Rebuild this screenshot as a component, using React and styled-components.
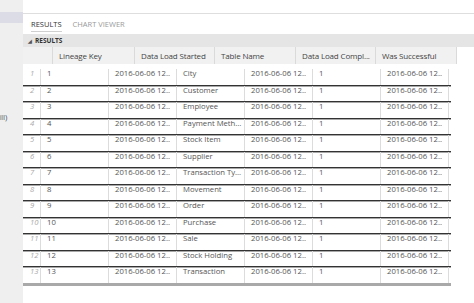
import React from 'react';
import styled, { createGlobalStyle } from 'styled-components';

const Global = createGlobalStyle`
  html, body { margin: 0; padding: 0; background: #fff; }
  body { font-family: "Open Sans", "Noto Sans", sans-serif; }
`;

const tables = [
  'City', 'Customer', 'Employee', 'Payment Meth...', 'Stock Item', 'Supplier',
  'Transaction Ty...', 'Movement', 'Order', 'Purchase', 'Sale', 'Stock Holding', 'Transaction',
];

const Page = styled.div`
  display: flex;
  width: 474px;
  height: 303px;
  overflow: hidden;
`;

const Sidebar = styled.div`
  width: 23px;
  flex: none;
  background: #efefef;
  display: flex;
  flex-direction: column;
`;

const SideBand = styled.div`
  margin-top: 12px;
  height: 11px;
  background: #dcdce6;
`;

const SideText = styled.div`
  margin-top: 89px;
  font-size: 8px;
  color: #555;
  line-height: 10px;
  margin-left: -1px;
`;

const Main = styled.div`
  flex: 1;
  display: flex;
  flex-direction: column;
  min-width: 0;
`;

const TopBar = styled.div`
  height: 13px;
  border-bottom: 1px solid #dedede;
  flex: none;
`;

const Tabs = styled.div`
  display: flex;
  gap: 11px;
  padding-left: 8px;
  height: 20px;
  align-items: flex-start;
  flex: none;
`;

const Tab = styled.div`
  font-size: 7.5px;
  color: ${p => (p.$active ? '#333' : '#9a9a9a')};
  padding-top: 6px;
  padding-bottom: 3px;
  line-height: 8px;
  border-bottom: 1px solid ${p => (p.$active ? '#d0d0d0' : 'transparent')};
`;

const ResultsBar = styled.div`
  height: 13px;
  background: #e5e5e5;
  display: flex;
  align-items: center;
  padding-left: 5px;
  gap: 3px;
  font-size: 6.5px;
  font-weight: 700;
  color: #333;
  flex: none;
`;

const Arrow = styled.span`
  font-size: 5px;
  color: #555;
`;

const HeaderRow = styled.div`
  display: grid;
  grid-template-columns: 30px 82px 80px 81px 80px 81px;
  width: 434px;
  height: 17px;
  background: #f1f1f1;
  flex: none;
`;

const HeadCell = styled.div`
  border-right: 1px solid #dadada;
  font-size: 8px;
  letter-spacing: -0.15px;
  color: #444;
  padding-left: 6px;
  display: flex;
  align-items: center;
  white-space: nowrap;
  overflow: hidden;
`;

const Body = styled.div`
  padding-top: 4px;
  width: 428px;
  display: flex;
  flex-direction: column;
`;

const Row = styled.div`
  display: grid;
  grid-template-columns: 18px 68px 68px 68px 68px 68px 68px;
  height: 16.5px;
  box-sizing: border-box;
  border-top: ${p => (p.$first ? '1px solid transparent' : '1px solid #333')};
  box-shadow: ${p => (p.$first ? 'none' : 'inset 0 1px 0 #a8a8a8')};
`;

const Cell = styled.div`
  border-right: 1px solid #dcdcdc;
  font-size: 7.7px;
  line-height: 9px;
  color: ${p => (p.$num ? '#aaa' : '#555')};
  font-style: ${p => (p.$num ? 'italic' : 'normal')};
  padding-left: ${p => (p.$num ? '7px' : '6px')};
  white-space: nowrap;
  overflow: hidden;
`;

const BottomLine = styled.div`
  height: 3px;
  width: 428px;
  background: #a9a9a9;
`;

export default function App() {
  const date = '2016-06-06 12..';
  return (
    <Page>
      <Global />
      <Sidebar>
        <SideBand />
        <SideText>ill)</SideText>
      </Sidebar>
      <Main>
        <TopBar />
        <Tabs>
          <Tab $active>RESULTS</Tab>
          <Tab>CHART VIEWER</Tab>
        </Tabs>
        <ResultsBar>
          <Arrow>◢</Arrow>
          RESULTS
        </ResultsBar>
        <HeaderRow>
          <HeadCell />
          <HeadCell>Lineage Key</HeadCell>
          <HeadCell>Data Load Started</HeadCell>
          <HeadCell>Table Name</HeadCell>
          <HeadCell>Data Load Compl...</HeadCell>
          <HeadCell>Was Successful</HeadCell>
        </HeaderRow>
        <Body>
          {tables.map((t, i) => (
            <Row key={t} $first={i === 0}>
              <Cell $num>{i + 1}</Cell>
              <Cell>{i + 1}</Cell>
              <Cell>{date}</Cell>
              <Cell>{t}</Cell>
              <Cell>{date}</Cell>
              <Cell>1</Cell>
              <Cell>{date}</Cell>
            </Row>
          ))}
          <BottomLine />
        </Body>
      </Main>
    </Page>
  );
}
